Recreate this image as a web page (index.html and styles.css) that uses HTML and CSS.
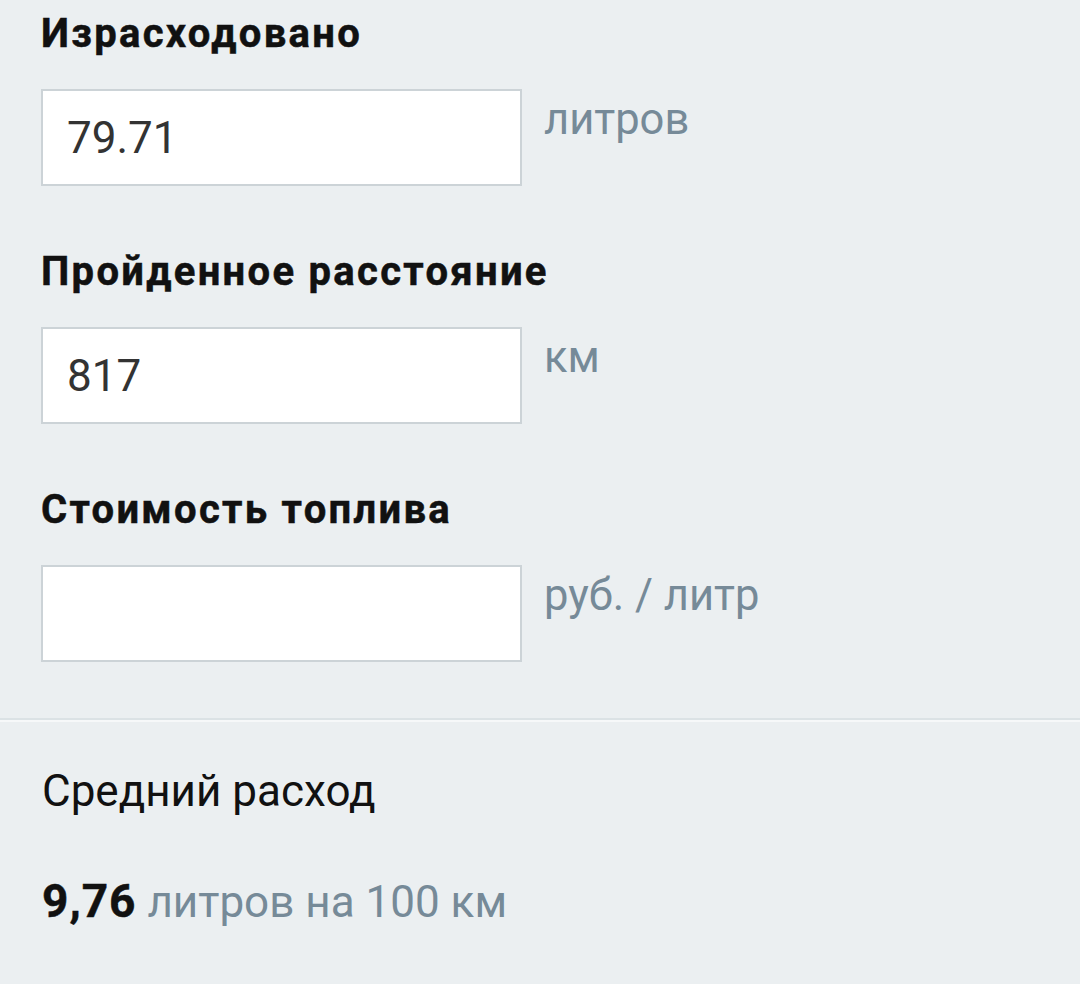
FILE: index.html
```html
<!DOCTYPE html>
<html lang="ru">
<head>
  <meta charset="UTF-8" />
  <meta name="viewport" content="width=device-width, initial-scale=1" />
  <title>Расход топлива</title>
  <link rel="stylesheet" href="styles.css">
</head>
<body>
  <form class="calc-form">
    <div class="field">
      <label for="spent">Израсходовано</label>
      <div class="field-row">
        <input type="text" id="spent" value="79.71" />
        <span class="unit">литров</span>
      </div>
    </div>

    <div class="field">
      <label for="distance">Пройденное расстояние</label>
      <div class="field-row">
        <input type="text" id="distance" value="817" />
        <span class="unit">км</span>
      </div>
    </div>

    <div class="field">
      <label for="price">Стоимость топлива</label>
      <div class="field-row">
        <input type="text" id="price" value="" />
        <span class="unit">руб. / литр</span>
      </div>
    </div>
  </form>

  <div class="result">
    <div class="result-title">Средний расход</div>
    <div class="result-value"><b>9,76</b> литров на 100 км</div>
  </div>
</body>
</html>
```

FILE: styles.css
```css
* {
  box-sizing: border-box;
}

body {
  margin: 0;
  font-family: Roboto, "Noto Sans", Arial, sans-serif;
  background: #ebeff1;
  color: #111;
}

.calc-form {
  padding: 10px 41px 0;
}

.field {
  margin-bottom: 62px;
}

.field:last-child {
  margin-bottom: 56px;
}

.field label {
  display: block;
  font-size: 40px;
  line-height: 48px;
  font-weight: 700;
  letter-spacing: 2.3px;
  -webkit-text-stroke: 0.5px #111;
  margin-bottom: 31px;
}

.field-row {
  display: flex;
  align-items: flex-start;
  gap: 22px;
}

.field-row input {
  width: 481px;
  height: 97px;
  padding: 0 24px;
  border: 2px solid #ccd3d7;
  background: #fff;
  font-family: inherit;
  font-size: 44px;
  color: #333;
  outline: none;
}

.unit {
  padding-top: 5px;
  font-size: 43.5px;
  line-height: 52px;
  color: #768a98;
}

.result {
  border-top: 2px solid #dbe2e5;
  box-shadow: inset 0 2px 0 #f6f8f9;
  padding: 45px 42px 48px;
}

.result-title {
  font-size: 44px;
  line-height: 52px;
  margin-bottom: 58px;
}

.result-value {
  font-size: 44px;
  line-height: 52px;
  color: #768a98;
}

.result-value b {
  font-size: 46px;
  letter-spacing: 1px;
  -webkit-text-stroke: 0.5px #111;
  color: #111;
}
```
